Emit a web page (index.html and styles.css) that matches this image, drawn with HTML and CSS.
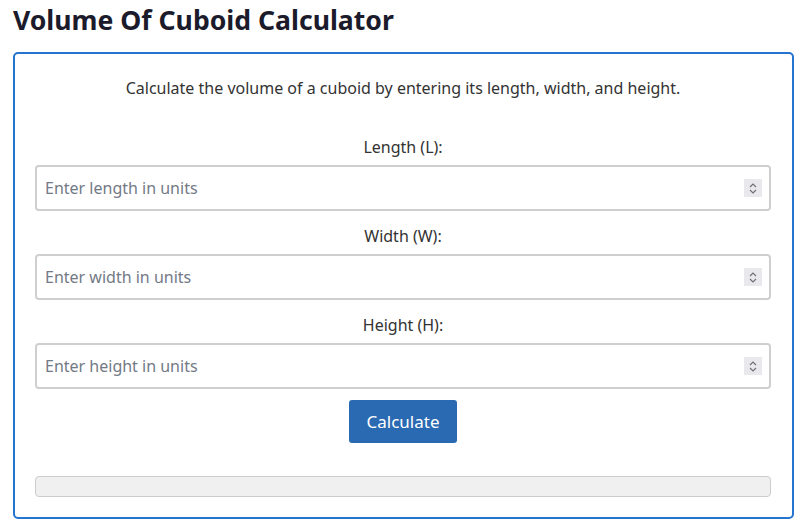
FILE: index.html
```html
<!DOCTYPE html>
<html>
<head>
<meta charset="utf-8">
<link rel="stylesheet" href="styles.css">
</head>
<body>
<div class="page">
  <h1 class="title">Volume Of Cuboid Calculator</h1>
  <div class="card">
    <p class="desc">Calculate the volume of a cuboid by entering its length, width, and height.</p>
    <label class="label" for="l">Length (L):</label>
    <div class="field-wrap">
      <input class="field" id="l" type="number" placeholder="Enter length in units">
      <span class="spin"><svg width="18" height="18" viewBox="0 0 18 18"><path d="M6 8 L9 5 L12 8 M6 11 L9 14 L12 11" fill="none" stroke="#6f6f78" stroke-width="1.2"/></svg></span>
    </div>
    <label class="label" for="w">Width (W):</label>
    <div class="field-wrap">
      <input class="field" id="w" type="number" placeholder="Enter width in units">
      <span class="spin"><svg width="18" height="18" viewBox="0 0 18 18"><path d="M6 8 L9 5 L12 8 M6 11 L9 14 L12 11" fill="none" stroke="#6f6f78" stroke-width="1.2"/></svg></span>
    </div>
    <label class="label" for="h">Height (H):</label>
    <div class="field-wrap">
      <input class="field" id="h" type="number" placeholder="Enter height in units">
      <span class="spin"><svg width="18" height="18" viewBox="0 0 18 18"><path d="M6 8 L9 5 L12 8 M6 11 L9 14 L12 11" fill="none" stroke="#6f6f78" stroke-width="1.2"/></svg></span>
    </div>
    <div class="actions"><button class="btn">Calculate</button></div>
    <div class="result"></div>
  </div>
</div>
</body>
</html>
```
FILE: styles.css
```css
html, body { margin: 0; padding: 0; background: #fff; }
body { font-family: "Noto Sans", "Open Sans", sans-serif; color: #333; }
.page { padding: 0 11px 0 13px; }
.title {
  margin: 0;
  padding-top: 2px;
  height: 50px;
  font-size: 26.6px;
  font-weight: 700;
  color: #1b1b2b;
  line-height: 36px;
}
.card {
  border: 2px solid #2474d0;
  border-radius: 5px;
  padding: 21px 21px 20px 20px;
  display: flex;
  flex-direction: column;
}
.desc {
  margin: 2px 0 37px;
  text-align: center;
  font-size: 16px;
  line-height: 22px;
  color: #333;
}
.label {
  display: block;
  text-align: center;
  font-size: 16px;
  line-height: 22px;
  margin-bottom: 7px;
  color: #333;
}
.field-wrap {
  position: relative;
  margin: 0 0 14px;
}
.field {
  display: block;
  box-sizing: border-box;
  height: 46px;
  width: 100%;
  border: 2px solid #cfcfcf;
  border-radius: 4px;
  padding: 0 8px;
  font-family: inherit;
  font-size: 16px;
  margin: 0;
  color: #333;
  appearance: textfield;
  -moz-appearance: textfield;
}
.field::-webkit-inner-spin-button,
.field::-webkit-outer-spin-button { -webkit-appearance: none; margin: 0; }
.field::placeholder { color: #737a86; }
.spin {
  position: absolute;
  right: 9px;
  top: 14px;
  width: 18px;
  height: 18px;
  background: #e9e9ed;
  display: flex;
}
.actions { display: flex; justify-content: center; margin-top: -3px; }
.btn {
  width: 108px;
  height: 43px;
  background: #2a6ab2;
  color: #fff;
  border: none;
  border-radius: 3px;
  font-family: inherit;
  font-size: 17px;
}
.result {
  margin-top: 33px;
  height: 21px;
  box-sizing: border-box;
  background: #f0f0f0;
  border: 1px solid #cccccc;
  border-radius: 4px;
}
```
